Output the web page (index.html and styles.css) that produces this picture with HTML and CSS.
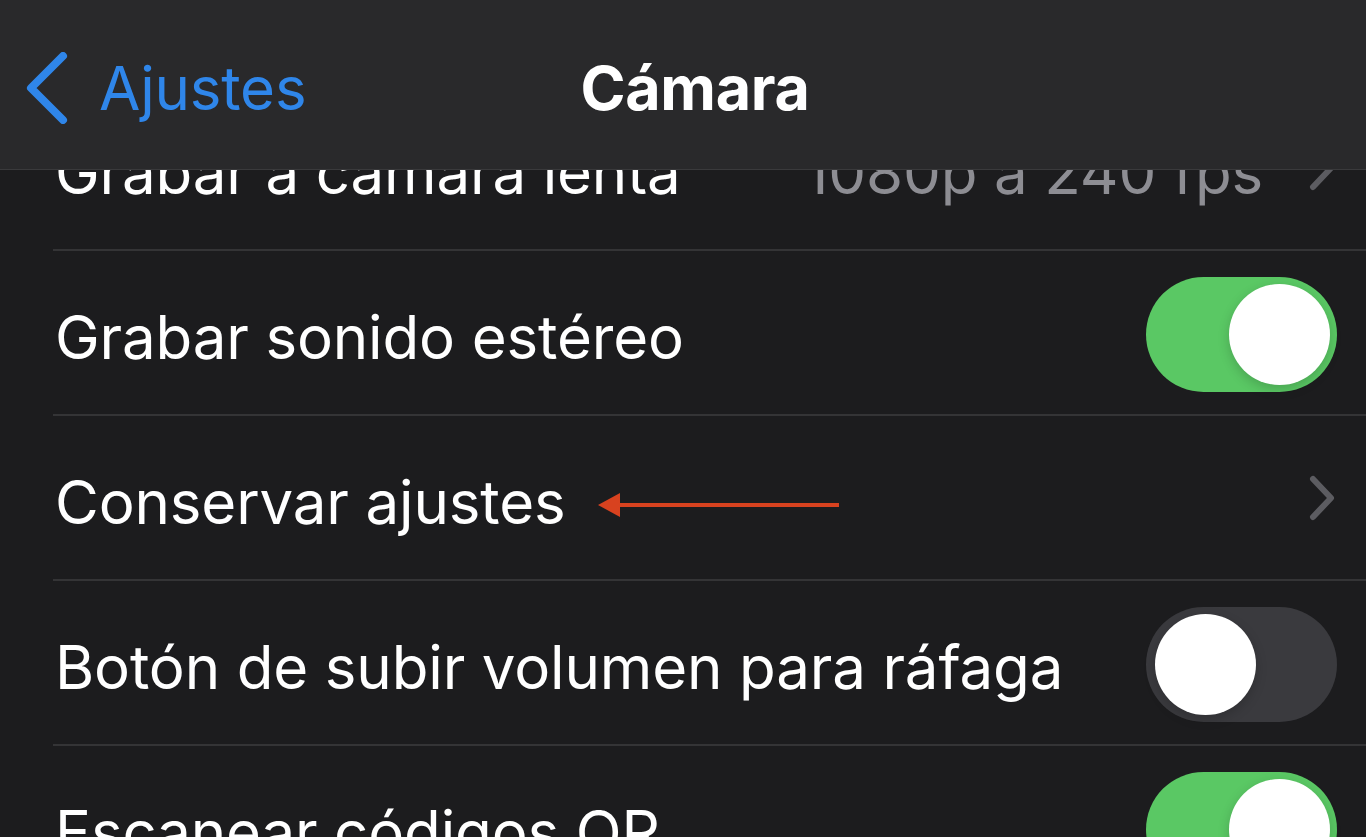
FILE: index.html
```html
<!DOCTYPE html>
<html lang="es">
<head>
  <meta charset="UTF-8" />
  <meta name="viewport" content="width=device-width, initial-scale=1" />
  <title>Cámara</title>
  <link rel="stylesheet" href="styles.css">
</head>
<body>
  <div class="screen">
    <header class="navbar">
      <a class="back" href="#">
        <svg class="back-icon" viewBox="0 0 44 72" width="44" height="72">
          <path d="M38 4 L6 36 L38 68" fill="none" stroke="currentColor" stroke-width="8" stroke-linecap="round" stroke-linejoin="round"/>
        </svg>
        <span>Ajustes</span>
      </a>
      <h1 class="title">Cámara</h1>
      <span></span>
    </header>

    <ul class="list">
      <li class="row">
        <span class="label">Grabar a cámara lenta</span>
        <span class="value">1080p a 240 fps</span>
        <svg class="chevron" viewBox="0 0 28 46" width="28" height="46">
          <path d="M5 4 L23 23 L5 42" fill="none" stroke="currentColor" stroke-width="6" stroke-linecap="round" stroke-linejoin="round"/>
        </svg>
      </li>
      <li class="row">
        <span class="label">Grabar sonido estéreo</span>
        <span class="switch on"><span class="knob"></span></span>
      </li>
      <li class="row">
        <span class="label">Conservar ajustes</span>
        <svg class="pointer" viewBox="0 0 241 26" width="241" height="26">
          <path d="M0 13 L22 1 L22 25 Z" fill="#d8421f"/>
          <rect x="18" y="11" width="223" height="4" fill="#d8421f"/>
        </svg>
        <svg class="chevron" viewBox="0 0 28 46" width="28" height="46">
          <path d="M5 4 L23 23 L5 42" fill="none" stroke="currentColor" stroke-width="6" stroke-linecap="round" stroke-linejoin="round"/>
        </svg>
      </li>
      <li class="row">
        <span class="label">Botón de subir volumen para ráfaga</span>
        <span class="switch"><span class="knob"></span></span>
      </li>
      <li class="row">
        <span class="label">Escanear códigos QR</span>
        <span class="switch on"><span class="knob"></span></span>
      </li>
    </ul>
  </div>
</body>
</html>
```

FILE: styles.css
```css
html, body { margin: 0; height: 100%; }
body { background: #1c1c1e; font-family: Inter, "Noto Sans", sans-serif; color: #fff; overflow: hidden; }
.screen { position: relative; height: 837px; overflow: hidden; }

/* barra de navegación fija, por encima de la lista */
.navbar { position: absolute; top: 0; left: 0; right: 0; height: 170px; z-index: 2; background: #29292b; border-bottom: 1px solid #3a3a3c; box-sizing: border-box; display: grid; grid-template-columns: 1fr auto 1fr; align-items: center; padding-top: 6px; }
.back { display: flex; align-items: center; gap: 30px; color: #2f86ea; text-decoration: none; font-size: 60px; padding-left: 25px; letter-spacing: -0.2px; }
.back-icon { display: block; }
.title { margin: 0; font-size: 61px; font-weight: 700; padding-left: 24px; letter-spacing: -0.3px; }

.list { list-style: none; margin: 86px 0 0; padding: 0; }
.row { height: 165px; box-sizing: border-box; margin-left: 53px; padding-right: 30px; border-bottom: 2px solid #343436; display: flex; align-items: center; font-size: 60px; letter-spacing: -0.15px; }
.label { flex: none; padding-left: 2px; padding-top: 8px; }
.value { margin-left: auto; color: #8d8d93; margin-right: 45px; padding-top: 8px; }
.chevron { color: #5c5c61; margin-left: auto; display: block; }
.value + .chevron { margin-left: 0; }
.pointer { margin-left: 32px; margin-top: 14px; display: block; }

/* interruptores */
.switch { margin-left: auto; width: 191px; height: 115px; border-radius: 58px; background: #3a3a3e; position: relative; flex: none; margin-right: -1px; margin-top: 3px; }
.switch.on { background: #5ac864; }
.knob { position: absolute; top: 7px; left: 9px; width: 101px; height: 101px; border-radius: 50%; background: #fff; box-shadow: 0 4px 12px rgba(0,0,0,0.18); }
.switch.on .knob { left: auto; right: 7px; }
```
